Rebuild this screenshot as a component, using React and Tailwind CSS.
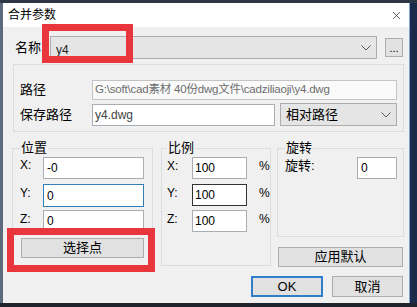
import { X } from "lucide-react";

const font = "font-['Liberation_Sans','Noto_Sans_CJK_SC',sans-serif]";

function Chevron() {
  return (
    <svg width="10" height="6" viewBox="0 0 10 6">
      <polyline points="0.5,0.5 5,5 9.5,0.5" fill="none" stroke="#555" strokeWidth="1" />
    </svg>
  );
}

export default function App() {
  return (
    <div className={`relative w-[417px] h-[307px] bg-[#1e2a3a] flex flex-col text-[#000] ${font}`}>
      <div className="h-[3px] bg-[#2c3646]" />
      <div className="flex h-[300px]">
        <div className="w-[3px] bg-[#5d6a7c]" />
        <div className="w-[406px] flex flex-col">
          {/* title bar */}
          <div className="h-[24px] bg-white flex items-center justify-between pl-[5px] pr-[6px]">
            <span className="text-[12px]">合并参数</span>
            <X size={13} strokeWidth={1.2} color="#111" />
          </div>

          {/* dialog body */}
          <div className="h-[276px] bg-[#f0f0f0] flex flex-col">
            <div className="mt-[9px] ml-[9px] flex items-center h-[23px]">
              <span className="w-[38px] text-[13px] pl-[3px]">名称</span>
              <div className="w-[327px] h-[23px] border border-[#adadad] bg-[#e5e5e5] flex items-center justify-between pl-[5px] pr-[5px]">
                <span className="text-[12px] mt-[4px] text-[#222]">y4</span>
                <Chevron />
              </div>
              <div className="ml-[8px] w-[18px] h-[19px] border border-[#adadad] bg-[#e1e1e1] flex items-end justify-center text-[11px] leading-[14px] pb-[1px]">
                ...
              </div>
            </div>

            <div className="mt-[5px] ml-[10px] w-[391px] h-[68px] border border-[#dcdcdc] flex flex-col pl-[6px]">
              <div className="mt-[15px] flex items-center h-[20px]">
                <span className="w-[72px] text-[13px]">路径</span>
                <div className="w-[305px] h-[20px] border border-[#c4c4c4] bg-[#fafafa] flex items-center pl-[2px] text-[11.5px] tracking-[-0.2px] text-[#6d6d6d] whitespace-nowrap overflow-hidden">
                  G:\soft\cad素材 40份dwg文件\cadziliaoji\y4.dwg
                </div>
              </div>
              <div className="mt-[3px] flex items-center h-[23px]">
                <span className="w-[72px] text-[13px]">保存路径</span>
                <div className="w-[183px] h-[22px] border border-[#abadb3] bg-white flex items-center pl-[2px] text-[12px] text-[#444]">
                  y4.dwg
                </div>
                <div className="ml-[5px] w-[117px] h-[23px] border border-[#adadad] bg-[#e5e5e5] flex items-center justify-between pl-[5px] pr-[5px]">
                  <span className="text-[13px]">相对路径</span>
                  <Chevron />
                </div>
              </div>
            </div>

            <div className="mt-[8px] ml-[9px] flex">
              {/* position */}
              <fieldset className="w-[141px] h-[126px] border border-[#dcdcdc] flex flex-col">
                <legend className="ml-[7px] px-[1px] text-[13px] leading-[16px]">位置</legend>
                <div className="mt-[1px] flex h-[22px]">
                  <span className="w-[30px] pl-[7px] text-[12px] leading-[16px]">X:</span>
                  <div className="w-[101px] h-[22px] border border-[#abadb3] bg-white flex items-center pl-[3px] text-[12px]">-0</div>
                </div>
                <div className="mt-[5px] flex h-[23px]">
                  <span className="w-[30px] pl-[7px] text-[12px] leading-[18px]">Y:</span>
                  <div className="w-[101px] h-[23px] border border-[#2f7fb8] bg-white flex items-center pl-[3px] text-[12px]">0</div>
                </div>
                <div className="mt-[3px] flex h-[22px]">
                  <span className="w-[30px] pl-[7px] text-[12px] leading-[18px]">Z:</span>
                  <div className="w-[101px] h-[22px] border border-[#abadb3] bg-white flex items-center pl-[3px] text-[12px]">0</div>
                </div>
                <button className="mt-[6px] ml-[8px] w-[123px] h-[20px] border border-[#adadad] bg-[#e1e1e1] text-[13px] leading-[18px]">
                  选择点
                </button>
              </fieldset>

              {/* scale */}
              <fieldset className="ml-[8px] w-[110px] h-[126px] border border-[#dcdcdc] flex flex-col">
                <legend className="ml-[5px] px-[1px] text-[13px] leading-[16px]">比例</legend>
                {["X:", "Y:", "Z:"].map((k, i) => (
                  <div key={k} className={`flex h-[22px] ${i === 0 ? "mt-[1px]" : i === 1 ? "mt-[5px]" : "mt-[4px]"}`}>
                    <span className="w-[30px] pl-[5px] text-[12px] leading-[18px]">{k}</span>
                    <div
                      className={`w-[55px] h-[22px] border bg-white flex items-center pl-[2px] text-[12px] ${
                        i === 1 ? "border-[#333]" : "border-[#abadb3]"
                      }`}
                    >
                      100
                    </div>
                    <span className="ml-[12px] text-[12px] leading-[18px]">%</span>
                  </div>
                ))}
              </fieldset>

              {/* rotation */}
              <div className="ml-[6px] w-[127px] flex flex-col">
                <fieldset className="h-[97px] border border-[#dcdcdc] flex flex-col">
                  <legend className="ml-[7px] px-[1px] text-[13px] leading-[16px]">旋转</legend>
                  <div className="mt-[1px] flex h-[22px]">
                    <span className="w-[79px] pl-[7px] text-[13px] leading-[18px]">旋转:</span>
                    <div className="w-[40px] h-[22px] border border-[#abadb3] bg-white flex items-center pl-[3px] text-[12px]">0</div>
                  </div>
                </fieldset>
                <button className="mt-[10px] ml-[1px] w-[125px] h-[20px] border border-[#adadad] bg-[#e1e1e1] text-[13px] leading-[18px]">
                  应用默认
                </button>
              </div>
            </div>

            <div className="mt-[9px] flex justify-end pr-[6px]">
              <button className="w-[72px] h-[21px] border-2 border-[#2f7fc8] bg-[#e1e1e1] text-[13px] leading-[17px]">
                OK
              </button>
              <button className="ml-[9px] w-[71px] h-[21px] border border-[#adadad] bg-[#e1e1e1] text-[13px] leading-[19px]">
                取消
              </button>
            </div>
          </div>
        </div>
        <div className="w-[1px] bg-[#7aa7d6]" />
        <div className="w-[7px] bg-[#1b2a48]" />
      </div>
      <div className="h-[4px] bg-[#1f242c]" />

      {/* red annotation boxes */}
      <div className="absolute left-[42px] top-[24px] w-[91px] h-[39px] border-[7px] border-[#e8363c]" />
      <div className="absolute left-[7px] top-[228px] w-[148px] h-[44px] border-[7px] border-[#e8363c]" />
    </div>
  );
}
